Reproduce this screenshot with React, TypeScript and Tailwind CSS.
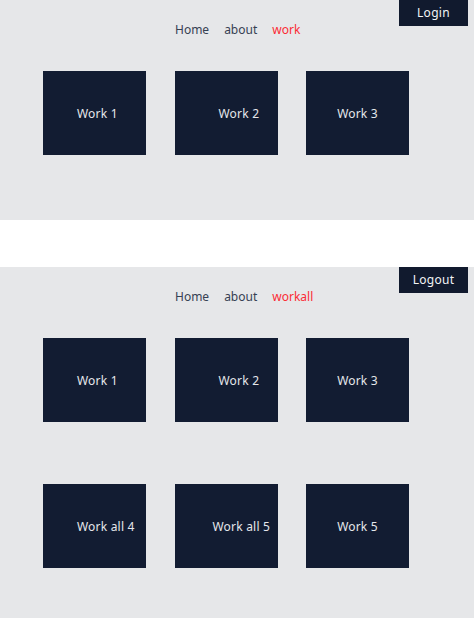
const cards1 = [
  { label: "Work 1", pad: "pl-[34px]" },
  { label: "Work 2", pad: "pl-[44px]" },
  { label: "Work 3", pad: "justify-center" },
];

const cards2 = [
  { label: "Work 1", pad: "pl-[34px]" },
  { label: "Work 2", pad: "pl-[44px]" },
  { label: "Work 3", pad: "justify-center" },
  { label: "Work all 4", pad: "pl-[34px]" },
  { label: "Work all 5", pad: "pl-[38px]" },
  { label: "Work 5", pad: "justify-center" },
];

function Header({ active, button }: { active: string; button: string }) {
  return (
    <div className="relative">
      <nav className="flex gap-[15px] pl-[175px] pt-[22px] text-[12px] leading-4 text-gray-700">
        <a>Home</a>
        <a>about</a>
        <a className="text-red-500">{active}</a>
      </nav>
      <button className="absolute top-0 right-[6px] h-[26px] w-[69px] bg-[#111a2e] text-[12px] tracking-[0.3px] text-gray-100">
        {button}
      </button>
    </div>
  );
}

function Card({ label, pad }: { label: string; pad: string }) {
  return (
    <div className={`flex h-[84px] w-[103px] items-center bg-[#121c32] pt-[2px] text-[12px] tracking-[0.2px] text-gray-200 ${pad}`}>
      {label}
    </div>
  );
}

export default function App() {
  return (
    <div className="w-[474px] bg-white font-['Noto_Sans',sans-serif]">
      <section className="h-[220px] bg-[#e6e7e9]">
        <Header active="work" button="Login" />
        <div className="mt-[33px] flex gap-[28.5px] pl-[43px]">
          {cards1.map((c) => (
            <Card key={c.label} {...c} />
          ))}
        </div>
      </section>
      <section className="mt-[47px] h-[351px] bg-[#e6e7e9]">
        <Header active="workall" button="Logout" />
        <div className="mt-[33px] grid w-fit grid-cols-[103px_103px_103px] gap-x-[28.5px] gap-y-[62px] pl-[43px]">
          {cards2.map((c) => (
            <Card key={c.label} {...c} />
          ))}
        </div>
      </section>
    </div>
  );
}
